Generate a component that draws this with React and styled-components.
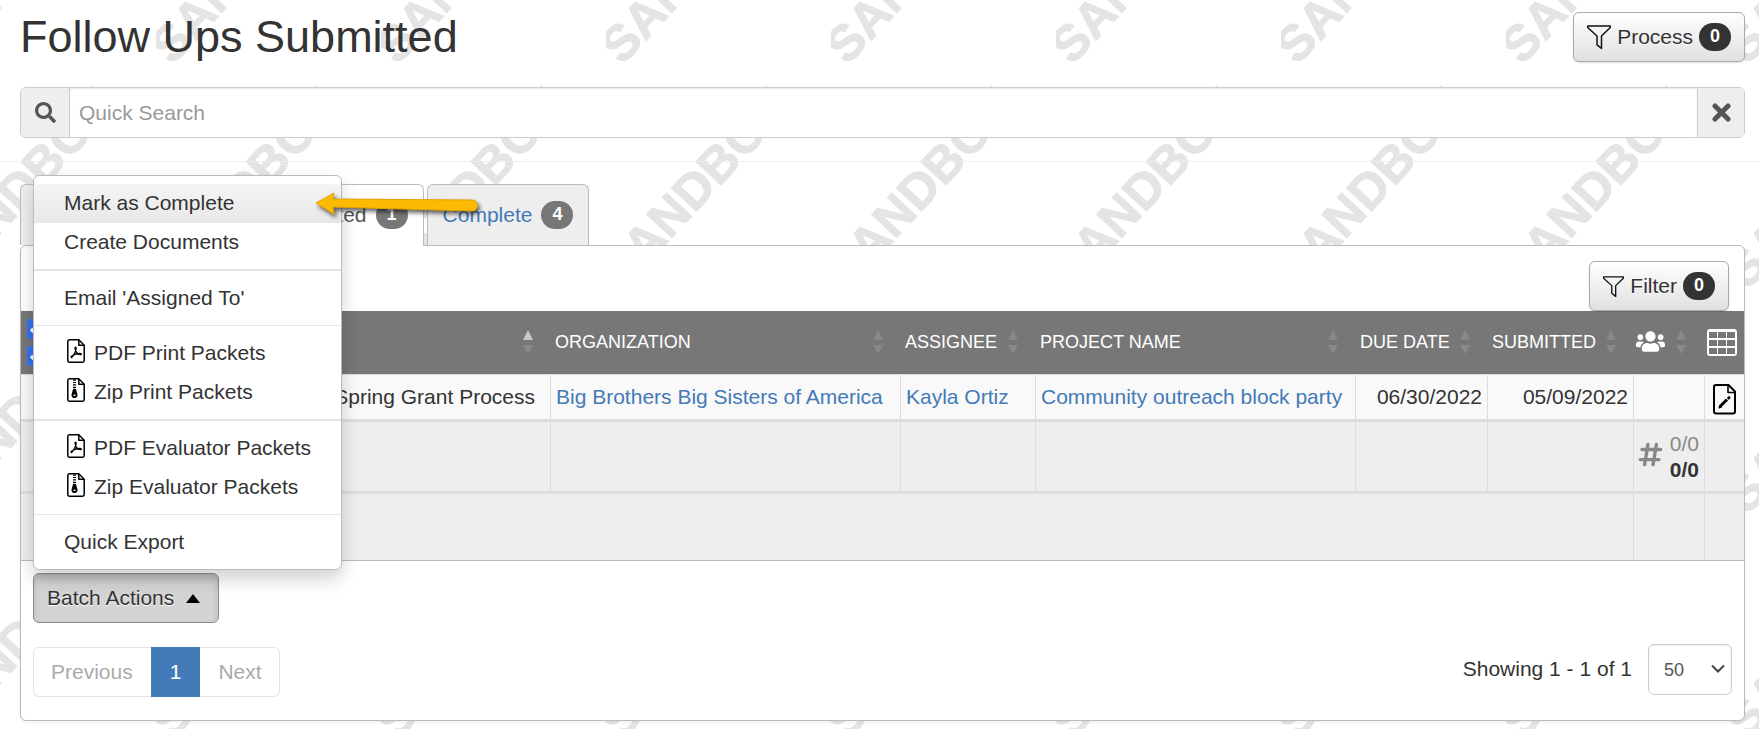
import { Fragment, useState } from 'react';
import styled, { createGlobalStyle, css } from 'styled-components';
import { FaSearch, FaUsers } from 'react-icons/fa';
import { FaHashtag } from 'react-icons/fa6';

const columns = [
  { key: 'process', sort: 'asc' },
  { key: 'organization', label: 'Organization', width: 350 },
  { key: 'assignee', label: 'Assignee', width: 135 },
  { key: 'project', label: 'Project Name', width: 320 },
  { key: 'due', label: 'Due Date', width: 132 },
  { key: 'submitted', label: 'Submitted', width: 146 }
];

const menuGroups = [
  [{ label: 'Mark as Complete' }, { label: 'Create Documents' }],
  [{ label: "Email 'Assigned To'" }],
  [
    { label: 'PDF Print Packets', icon: 'pdf' },
    { label: 'Zip Print Packets', icon: 'zip' }
  ],
  [
    { label: 'PDF Evaluator Packets', icon: 'pdf' },
    { label: 'Zip Evaluator Packets', icon: 'zip' }
  ],
  [{ label: 'Quick Export' }]
];

const Watermark = () => (
  <WatermarkSvg aria-hidden="true">
    <defs>
      <pattern id="sandbox" x="156" y="75" width="225" height="225" patternUnits="userSpaceOnUse">
        <text
          x="89"
          y="113"
          transform="rotate(-47 89 113)"
          textAnchor="middle"
          dominantBaseline="central"
          fontSize="50"
          fontWeight="bold"
          fill="#e4e4e4"
          stroke="#e4e4e4"
        >
          SANDBOX
        </text>
      </pattern>
    </defs>
    <rect width="100%" height="100%" fill="url(#sandbox)" />
  </WatermarkSvg>
);

const FunnelIcon = ({ size }) => (
  <svg width={size} height={size} viewBox="0 0 24 24" fill="none" stroke="#111" strokeWidth="1.5" strokeLinejoin="round">
    <path d="M.7 1h22.600v1.500l-8.800 8.500v12.300l-4.500-3.500v-8.800L.7 2.500z" />
  </svg>
);

const CloseIcon = () => (
  <svg width="19" height="19" viewBox="0 0 19 19" stroke="#555" strokeWidth="5" strokeLinecap="round">
    <path d="M3 3l13 13M16 3L3 16" />
  </svg>
);

const FileIcon = ({ type }) => (
  <svg width="18" height="24" viewBox="0 0 18 24" fill="none" stroke="#000" strokeWidth="1.500" strokeLinejoin="round">
    <path d="M2.500.8h9.300l5.400 5.400v15.300a1.700 1.700 0 0 1-1.700 1.700h-13a1.700 1.700 0 0 1-1.700-1.700v-19a1.700 1.700 0 0 1 1.700-1.700z" />
    <path d="M11.800.8v5.400h5.400" />
    {type === 'pdf' ? (
      <path
        strokeWidth="1.300"
        d="M8.600 8.200c-1 .1-.4 2.600.3 4 1 2 2.800 3.400 4.600 3.500 1.200 0 1.200-1.300-.8-1.300-3 0-6 1.200-7.900 2.700-1.400 1.200-.6 2.100.5.700 1.700-2 3.200-5 3.700-7.500.2-1.300.1-2.100-.4-2.100z"
      />
    ) : (
      <>
        <path strokeWidth="3" strokeDasharray="1.200 1.200" d="M7.500 1.500v9.500" />
        <path strokeWidth="1.300" fill="#000" d="M6.600 11.500h1.800l1.500 5.500a2.400 2.400 0 1 1-4.800 0z" />
        <ellipse cx="7.500" cy="17.200" rx="1.200" ry=".8" fill="#fff" stroke="none" />
      </>
    )}
  </svg>
);

const EditFileIcon = () => (
  <svg width="23" height="31" viewBox="0 0 23 31" fill="none" stroke="#000" strokeWidth="2" strokeLinejoin="round">
    <path d="M3 1h12.500L22 7.500v20a2 2 0 0 1-2 2H3a2 2 0 0 1-2-2V3a2 2 0 0 1 2-2z" />
    <path strokeWidth="1.600" d="M15 1.500V8.500h6.500" />
    <path strokeWidth="3" strokeLinejoin="miter" d="M7 22.500l7-7" />
    <path strokeWidth="3" strokeLinecap="round" d="M15.700 14l.3-.3" />
    <path strokeWidth="1.200" d="M6 24l1-2.500 1.500 1.500z" />
  </svg>
);

const GridIcon = () => (
  <svg width="30" height="27" viewBox="0 0 30 27">
    <rect width="30" height="27" rx="3" fill="#fff" />
    {[3, 11, 19].map((y) =>
      [2, 11, 20].map((x) => <rect key={`${x}-${y}`} x={x} y={y} width="8" height="6" fill="#777" />)
    )}
  </svg>
);

const SortIcon = ({ sort }) => (
  <svg width="10" height="24" viewBox="0 0 10 24">
    <path d="M0 10L5 0l5 10z" fill={sort === 'asc' ? '#c8c8c8' : '#898989'} />
    <path d="M0 15h10l-5 9z" fill="#898989" />
  </svg>
);

const Pointer = () => (
  <PointerSvg width="176" height="40" viewBox="0 0 176 40" aria-hidden="true">
    <path
      d="M4 18L22 8q-1 3-1 6L160 15a5.500 5.500 0 0 1 0 11L21 22q0 4 1.500 7.500z"
      fill="#fcba03"
      stroke="#e3a200"
      strokeLinejoin="round"
    />
  </PointerSvg>
);

const App = () => {
  const [search, setSearch] = useState('');
  const [isMenuOpen, setIsMenuOpen] = useState(true);
  const [checked, setChecked] = useState({ page: true, all: true, row: true });

  const onCheckHandler = (event) => {
    const { name, checked: value } = event.target;
    setChecked((prev) => ({ ...prev, [name]: value }));
  };

  return (
    <Page>
      <GlobalStyle />
      <Watermark />
      <Header>
        <Title>Follow Ups Submitted</Title>
        <Button>
          <FunnelIcon size={24} />
          Process
          <Badge $dark>0</Badge>
        </Button>
      </Header>
      <SearchBar>
        <SearchLabel htmlFor="search" aria-label="Quick Search">
          <FaSearch size={21} />
        </SearchLabel>
        <SearchInput
          id="search"
          value={search}
          onChange={(event) => setSearch(event.target.value)}
          placeholder="Quick Search"
        />
        <ClearButton aria-label="Clear" onClick={() => setSearch('')}>
          <CloseIcon />
        </ClearButton>
      </SearchBar>
      <Divider />
      <Main>
        <Tabs>
          <FirstTab href="#assigned" aria-label="Assigned" />
          <Tab href="#submitted" $active>
            Submitted <Badge>1</Badge>
          </Tab>
          <Tab href="#complete">
            Complete <Badge>4</Badge>
          </Tab>
        </Tabs>
        <Card>
          <Toolbar>
            <Button>
              <FunnelIcon size={21} />
              Filter
              <Badge $dark>0</Badge>
            </Button>
          </Toolbar>
          <Table>
            <colgroup>
              <Col $width={60} />
              {columns.map(({ key, width }) => (
                <Col key={key} $width={width} />
              ))}
              <Col $width={71} />
              <Col $width={40} />
            </colgroup>
            <thead>
              <tr>
                <HeadCell>
                  <CheckStack>
                    <Check type="checkbox" name="page" aria-label="Select page" checked={checked.page} onChange={onCheckHandler} />
                    <Check type="checkbox" name="all" aria-label="Select all" checked={checked.all} onChange={onCheckHandler} />
                  </CheckStack>
                </HeadCell>
                {columns.map(({ key, label, sort }) => (
                  <HeadCell key={key}>
                    <HeadContent>
                      <span>{label}</span>
                      <SortIcon sort={sort} />
                    </HeadContent>
                  </HeadCell>
                ))}
                <HeadCell $tight>
                  <HeadContent>
                    <FaUsers size={29} />
                    <SortIcon />
                  </HeadContent>
                </HeadCell>
                <HeadCell $tight>
                  <GridIcon />
                </HeadCell>
              </tr>
            </thead>
            <tbody>
              <BodyRow>
                <Cell>
                  <RowCheck type="checkbox" name="row" aria-label="Select row" checked={checked.row} onChange={onCheckHandler} />
                </Cell>
                <Cell $align="right" $wide>
                  Spring Grant Process
                </Cell>
                <Cell>
                  <Link href="#organization">Big Brothers Big Sisters of America</Link>
                </Cell>
                <Cell>
                  <Link href="#assignee">Kayla Ortiz</Link>
                </Cell>
                <Cell>
                  <Link href="#project">Community outreach block party</Link>
                </Cell>
                <Cell $align="right">06/30/2022</Cell>
                <Cell $align="right">05/09/2022</Cell>
                <Cell />
                <Cell $icon>
                  <EditFileIcon />
                </Cell>
              </BodyRow>
              <TotalRow>
                <Cell />
                {columns.map(({ key }) => (
                  <Cell key={key} />
                ))}
                <Cell>
                  <Totals>
                    <FaHashtag size={27} />
                    <div>
                      0/0
                      <strong>0/0</strong>
                    </div>
                  </Totals>
                </Cell>
                <Cell />
              </TotalRow>
              <SummaryRow>
                <Cell colSpan={7} />
                <Cell />
                <Cell />
              </SummaryRow>
            </tbody>
          </Table>
          <Footer>
            <Dropdown>
              <Button $active onClick={() => setIsMenuOpen((prev) => !prev)}>
                Batch Actions
                <Caret />
              </Button>
              {isMenuOpen && (
                <Menu>
                  {menuGroups.map((group, index) => (
                    <Fragment key={group[0].label}>
                      {index > 0 && <MenuDivider $thick={index % 2 === 1} />}
                      {group.map(({ label, icon }) => (
                        <MenuItem key={label} $hovered={label === 'Mark as Complete'}>
                          {icon && <FileIcon type={icon} />}
                          {label}
                        </MenuItem>
                      ))}
                    </Fragment>
                  ))}
                  <Pointer />
                </Menu>
              )}
            </Dropdown>
            <PagerRow>
              <Pagination>
                <PageButton disabled>Previous</PageButton>
                <PageButton $current>1</PageButton>
                <PageButton disabled>Next</PageButton>
              </Pagination>
              <PageSize>
                <label htmlFor="pageSize">Showing 1 - 1 of 1</label>
                <SelectBox>
                  <Select id="pageSize" defaultValue="50">
                    <option>50</option>
                    <option>100</option>
                  </Select>
                  <Chevron width="14" height="10" viewBox="0 0 14 10" fill="none" stroke="#444" strokeWidth="2">
                    <path d="M1 1.500l6 6 6-6" />
                  </Chevron>
                </SelectBox>
              </PageSize>
            </PagerRow>
          </Footer>
        </Card>
      </Main>
    </Page>
  );
};

const GlobalStyle = createGlobalStyle`
  * {
    box-sizing: border-box;
  }
  body {
    margin: 0;
    background-color: white;
    color: #333;
    font-family: "Liberation Sans", Arial, sans-serif;
    font-size: 21px;
    line-height: 30px;
  }
  button, input, select {
    font: inherit;
    color: inherit;
  }
`;

const Page = styled.div`
  position: relative;
  z-index: 0;
  min-height: 100vh;
  overflow: hidden;
`;
const WatermarkSvg = styled.svg`
  position: absolute;
  inset: 0;
  z-index: -1;
  width: 100%;
  height: 100%;
`;

const Header = styled.header`
  display: flex;
  justify-content: space-between;
  align-items: flex-start;
  padding: 12px 14px 0 20px;
`;
const Title = styled.h1`
  margin: 0;
  font-size: 45px;
  font-weight: normal;
  line-height: 49px;
`;
const Button = styled.button`
  display: flex;
  align-items: center;
  gap: 6px;
  height: 50px;
  padding: 0 13px;
  border: 1px solid #aaa;
  border-radius: 6px;
  background: linear-gradient(#fff, #e0e0e0);
  box-shadow: 0 1px 2px rgba(0, 0, 0, 0.12);
  text-shadow: 0 1px 0 white;
  cursor: pointer;
  ${({ $active }) =>
    $active &&
    css`
      gap: 12px;
      padding-right: 18px;
      border-color: #8c8c8c;
      background: #d4d4d4;
      box-shadow: inset 0 4px 7px rgba(0, 0, 0, 0.15);
    `}
`;
const Badge = styled.span`
  min-width: 32px;
  height: 28px;
  border-radius: 14px;
  background-color: ${({ $dark }) => ($dark ? '#333' : '#777')};
  color: white;
  font-size: 18px;
  font-weight: bold;
  line-height: 27px;
  text-align: center;
  text-shadow: none;
`;

const SearchBar = styled.div`
  display: flex;
  height: 51px;
  margin: 25px 14px 0 20px;
  border: 1px solid #ccc;
  border-radius: 6px;
  background-color: white;
  overflow: hidden;
`;
const SearchLabel = styled.label`
  display: flex;
  align-items: center;
  justify-content: center;
  width: 49px;
  border-right: 1px solid #ccc;
  background-color: #eee;
  color: #555;
`;
const SearchInput = styled.input`
  flex: 1;
  min-width: 0;
  padding: 0 9px;
  border: none;
  outline: none;
  background-color: white;
  box-shadow: inset 0 1px 2px rgba(0, 0, 0, 0.1);
  &::placeholder {
    color: #999;
  }
`;
const ClearButton = styled.button`
  display: flex;
  align-items: center;
  justify-content: center;
  width: 47px;
  padding: 0;
  border: none;
  border-left: 1px solid #ccc;
  background-color: #eee;
  cursor: pointer;
`;
const Divider = styled.hr`
  height: 1px;
  margin: 23px 0 22px;
  border: none;
  background-color: #eee;
`;

const Main = styled.main`
  padding: 0 14px 8px 20px;
`;
const Tabs = styled.nav`
  display: flex;
  gap: 3px;
`;
const Tab = styled.a`
  display: flex;
  align-items: center;
  gap: 9px;
  height: 61px;
  padding: 0 15px;
  border: 1px solid #bbb;
  border-bottom: none;
  border-radius: 6px 6px 0 0;
  background-color: #eee;
  color: #447ab7;
  text-decoration: none;
  ${({ $active }) =>
    $active &&
    css`
      z-index: 1;
      height: 62px;
      margin-bottom: -1px;
      padding-bottom: 1px;
      background-color: white;
      color: #555;
    `}
`;
const FirstTab = styled(Tab)`
  min-width: 233px;
`;
const Card = styled.section`
  border: 1px solid #bbb;
  border-radius: 6px;
  background-color: white;
  box-shadow: 0 2px 3px rgba(0, 0, 0, 0.05);
`;
const Toolbar = styled.div`
  display: flex;
  justify-content: flex-end;
  padding: 15px 15px 0;
`;

const Table = styled.table`
  width: 100%;
  table-layout: fixed;
  border-spacing: 0;
  border-bottom: 1px solid #bbb;
  white-space: nowrap;
`;
const Col = styled.col`
  width: ${({ $width }) => ($width ? `${$width}px` : 'auto')};
`;
const HeadContent = styled.div`
  display: flex;
  align-items: center;
  justify-content: space-between;
  padding: 0 12px 2px 0;
`;
const HeadCell = styled.th`
  height: 63px;
  padding: ${({ $tight }) => ($tight ? '0 2px 0 3px' : '0 5px')};
  background-color: #777;
  color: white;
  font-size: 18px;
  font-weight: normal;
  text-align: left;
  text-transform: uppercase;
  svg {
    display: block;
  }
  ${HeadContent} {
    padding-right: ${({ $tight }) => $tight && '16px'};
  }
`;
const CheckStack = styled.div`
  display: flex;
  flex-direction: column;
  gap: 7px;
`;
const Check = styled.input`
  width: 20px;
  height: 20px;
  margin: 0 1px;
  accent-color: #3572f0;
`;
const RowCheck = styled(Check)`
  display: block;
  margin: 0 auto;
`;
const Cell = styled.td`
  padding: ${({ $icon }) => ($icon ? '5px 8px 0' : '0 5px')};
  padding-right: ${({ $wide }) => $wide && '15px'};
  border-left: 1px solid #ddd;
  text-align: ${({ $align }) => $align || 'left'};
  &:first-child {
    border-left: none;
  }
  svg {
    display: block;
  }
`;
const BodyRow = styled.tr`
  height: 45px;
  background-color: #f9f9f9;
  td {
    border-top: 1px solid #ddd;
  }
`;
const TotalRow = styled.tr`
  height: 72px;
  background-color: #eee;
  td {
    border-top: 3px solid #ddd;
  }
`;
const SummaryRow = styled(TotalRow)`
  height: 69px;
`;
const Totals = styled.div`
  display: flex;
  align-items: center;
  justify-content: space-between;
  color: #888;
  line-height: 26px;
  svg {
    flex-shrink: 0;
    margin: 0 0 4px -2px;
  }
  strong {
    display: block;
    color: #333;
  }
`;
const Link = styled.a`
  color: #447ab7;
  text-decoration: none;
`;

const Footer = styled.footer`
  padding: 12px 12px 23px;
`;
const Dropdown = styled.div`
  position: relative;
  width: fit-content;
`;
const Caret = styled.span`
  border: 7px solid transparent;
  border-top: none;
  border-bottom: 9px solid black;
`;
const Menu = styled.div`
  position: absolute;
  bottom: calc(100% + 3px);
  left: 0;
  z-index: 2;
  padding: 8px 0 7px;
  border: 1px solid #bbb;
  border-radius: 6px;
  background-color: white;
  box-shadow: 0 9px 18px rgba(0, 0, 0, 0.18);
  white-space: nowrap;
`;
const MenuDivider = styled.div`
  height: ${({ $thick }) => ($thick ? '2px' : '1px')};
  margin: 7px 0 8px;
  background-color: #e5e5e5;
`;
const MenuItem = styled.button`
  display: flex;
  align-items: flex-start;
  gap: 9px;
  width: 100%;
  height: 39px;
  padding: 4px 30px 5px;
  border: none;
  background: ${({ $hovered }) => ($hovered ? 'linear-gradient(#f5f5f5, #e8e8e8)' : 'none')};
  text-align: left;
  cursor: pointer;
  svg {
    margin: 1px 0 0 3px;
  }
`;
const PointerSvg = styled.svg`
  position: absolute;
  top: 9px;
  left: 278px;
  filter: drop-shadow(2px 3px 2px rgba(0, 0, 0, 0.6));
`;

const PagerRow = styled.div`
  display: flex;
  align-items: flex-start;
  justify-content: space-between;
  min-height: 53px;
  margin-top: 21px;
`;
const Pagination = styled.div`
  display: flex;
  align-self: flex-end;
  border-radius: 6px;
  overflow: hidden;
  box-shadow: inset 0 0 0 1px #e2e2e2;
`;
const PageButton = styled.button`
  height: 50px;
  padding: 0 ${({ $current }) => ($current ? '19px' : '18px')};
  border: none;
  background-color: ${({ $current }) => ($current ? '#447ab7' : 'transparent')};
  color: ${({ $current }) => ($current ? 'white' : '#aaa')};
`;
const PageSize = styled.div`
  display: flex;
  align-items: baseline;
  gap: 16px;
`;
const SelectBox = styled.div`
  position: relative;
`;
const Select = styled.select`
  appearance: none;
  width: 84px;
  height: 51px;
  padding: 0 15px;
  border: 1px solid #ccc;
  border-radius: 6px;
  background-color: white;
  box-shadow: inset 0 1px 2px rgba(0, 0, 0, 0.08);
  color: #555;
  font-size: 18px;
`;
const Chevron = styled.svg`
  position: absolute;
  top: 20px;
  right: 7px;
  pointer-events: none;
`;

export default App;
